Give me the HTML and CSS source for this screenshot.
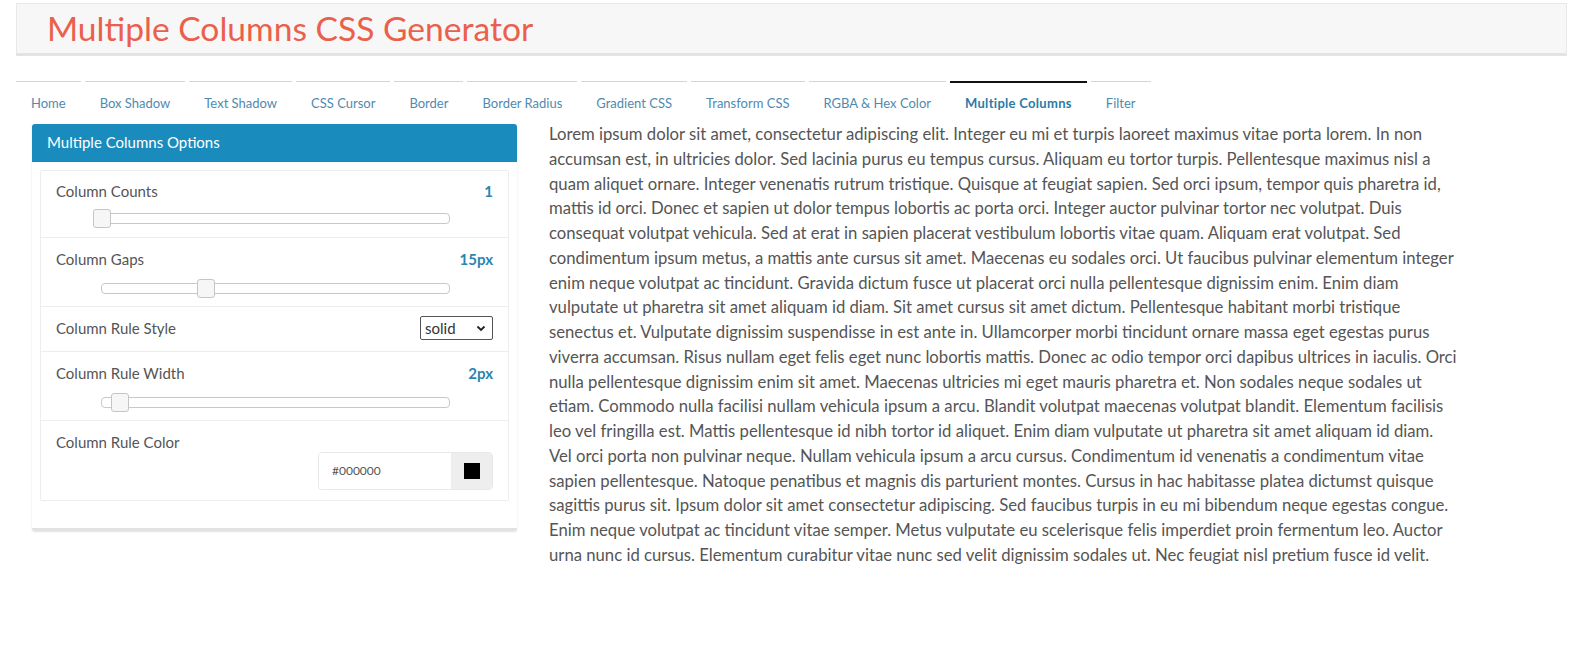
FILE: index.html
```html
<!DOCTYPE html>
<html lang="en">
<head>
<meta charset="utf-8">
<title>Multiple Columns CSS Generator</title>
<link rel="stylesheet" href="styles.css">
</head>
<body>
<header class="site-header">
  <h1 class="site-title">Multiple Columns CSS Generator</h1>
</header>
<nav class="tabs">
  <a class="tab" href="#">Home</a>
  <a class="tab" href="#">Box Shadow</a>
  <a class="tab" href="#">Text Shadow</a>
  <a class="tab" href="#">CSS Cursor</a>
  <a class="tab" href="#">Border</a>
  <a class="tab" href="#">Border Radius</a>
  <a class="tab" href="#">Gradient CSS</a>
  <a class="tab" href="#">Transform CSS</a>
  <a class="tab" href="#">RGBA &amp; Hex Color</a>
  <a class="tab tab-active" href="#">Multiple Columns</a>
  <a class="tab" href="#">Filter</a>
</nav>
<main class="content">
  <section class="panel">
    <div class="panel-heading">Multiple Columns Options</div>
    <div class="panel-body">
      <ul class="options">
        <li class="option option-first">
          <div class="option-head"><span class="option-label">Column Counts</span><span class="option-value">1</span></div>
          <div class="slider"><span class="slider-thumb" style="left:0%"></span></div>
        </li>
        <li class="option option-range">
          <div class="option-head"><span class="option-label">Column Gaps</span><span class="option-value">15px</span></div>
          <div class="slider"><span class="slider-thumb" style="left:30%"></span></div>
        </li>
        <li class="option option-select">
          <div class="option-head">
            <span class="option-label">Column Rule Style</span>
            <span class="select-wrap">
              <select class="select">
                <option>solid</option>
                <option>dotted</option>
                <option>dashed</option>
                <option>double</option>
              </select>
              <svg class="select-arrow" width="10" height="7" viewBox="0 0 10 7"><path d="M1.5 1.5 L5 5 L8.5 1.5" fill="none" stroke="#222" stroke-width="1.8"/></svg>
            </span>
          </div>
        </li>
        <li class="option option-range">
          <div class="option-head"><span class="option-label">Column Rule Width</span><span class="option-value">2px</span></div>
          <div class="slider"><span class="slider-thumb" style="left:5.2%"></span></div>
        </li>
        <li class="option option-color">
          <div class="option-label option-label-block">Column Rule Color</div>
          <div class="color-row">
            <div class="color-group">
              <span class="color-text">#000000</span>
              <span class="color-addon"><span class="color-swatch"></span></span>
            </div>
          </div>
        </li>
      </ul>
    </div>
  </section>
  <article class="preview">
    <p class="preview-text">Lorem ipsum dolor sit amet, consectetur adipiscing elit. Integer eu mi et turpis laoreet maximus vitae porta lorem. In non<br>
accumsan est, in ultricies dolor. Sed lacinia purus eu tempus cursus. Aliquam eu tortor turpis. Pellentesque maximus nisl a<br>
quam aliquet ornare. Integer venenatis rutrum tristique. Quisque at feugiat sapien. Sed orci ipsum, tempor quis pharetra id,<br>
mattis id orci. Donec et sapien ut dolor tempus lobortis ac porta orci. Integer auctor pulvinar tortor nec volutpat. Duis<br>
consequat volutpat vehicula. Sed at erat in sapien placerat vestibulum lobortis vitae quam. Aliquam erat volutpat. Sed<br>
condimentum ipsum metus, a mattis ante cursus sit amet. Maecenas eu sodales orci. Ut faucibus pulvinar elementum integer<br>
enim neque volutpat ac tincidunt. Gravida dictum fusce ut placerat orci nulla pellentesque dignissim enim. Enim diam<br>
vulputate ut pharetra sit amet aliquam id diam. Sit amet cursus sit amet dictum. Pellentesque habitant morbi tristique<br>
senectus et. Vulputate dignissim suspendisse in est ante in. Ullamcorper morbi tincidunt ornare massa eget egestas purus<br>
viverra accumsan. Risus nullam eget felis eget nunc lobortis mattis. Donec ac odio tempor orci dapibus ultrices in iaculis. Orci<br>
nulla pellentesque dignissim enim sit amet. Maecenas ultricies mi eget mauris pharetra et. Non sodales neque sodales ut<br>
etiam. Commodo nulla facilisi nullam vehicula ipsum a arcu. Blandit volutpat maecenas volutpat blandit. Elementum facilisis<br>
leo vel fringilla est. Mattis pellentesque id nibh tortor id aliquet. Enim diam vulputate ut pharetra sit amet aliquam id diam.<br>
Vel orci porta non pulvinar neque. Nullam vehicula ipsum a arcu cursus. Condimentum id venenatis a condimentum vitae<br>
sapien pellentesque. Natoque penatibus et magnis dis parturient montes. Cursus in hac habitasse platea dictumst quisque<br>
sagittis purus sit. Ipsum dolor sit amet consectetur adipiscing. Sed faucibus turpis in eu mi bibendum neque egestas congue.<br>
Enim neque volutpat ac tincidunt vitae semper. Metus vulputate eu scelerisque felis imperdiet proin fermentum leo. Auctor<br>
urna nunc id cursus. Elementum curabitur vitae nunc sed velit dignissim sodales ut. Nec feugiat nisl pretium fusce id velit.</p>
  </article>
</main>
</body>
</html>
```
FILE: styles.css
```css
* { box-sizing: border-box; }

html, body { background: #ffffff; }

body {
  margin: 0;
  padding: 3px 18px 0 16px;
  font-family: Lato, "Liberation Sans", sans-serif;
  color: #555555;
}

.site-header {
  height: 53px;
  background: #f7f7f7;
  border: 1px solid #e8e8e8;
  border-bottom: 3px solid #e3e3e3;
}

.site-title {
  margin: 0;
  padding-left: 30px;
  font-size: 33.6px;
  font-weight: 400;
  line-height: 49px;
  color: #eb604c;
}

.tabs {
  display: flex;
  gap: 4px;
  margin-top: 25px;
}

.tab {
  display: block;
  padding: 11px 15px 9px;
  border-top: 1px solid #d4d4d4;
  font-size: 13px;
  line-height: 20px;
  color: #4f8ab0;
  text-decoration: none;
}

.tab-active {
  border-top: 2px solid #111111;
  padding-top: 10px;
  font-weight: 700;
  letter-spacing: 0.3px;
  color: #2b7ba6;
}

.content {
  display: flex;
  align-items: flex-start;
}

.panel {
  flex: 0 0 485px;
  margin: 2px 0 0 16px;
  background: #ffffff;
  border-radius: 3px;
  box-shadow: 0 1px 2px rgba(0, 0, 0, 0.12);
  border-bottom: 3px solid #e2e2e2;
}

.panel-heading {
  height: 38px;
  padding: 0 15px;
  line-height: 37px;
  font-size: 15px;
  color: #ffffff;
  background: #1a8bbd;
  border-radius: 3px 3px 0 0;
}

.panel-body {
  padding: 8px 8px 27px;
}

.options {
  list-style: none;
  margin: 0;
  padding: 0;
  border: 1px solid #ededed;
  border-radius: 2px;
}

.option {
  padding: 9px 15px 12px;
  border-top: 1px solid #ededed;
}

.option-first {
  border-top: 0;
  padding-top: 8px;
  padding-bottom: 13px;
}

.option-select { padding-bottom: 11px; }

.option-color {
  padding-top: 10px;
  padding-bottom: 10px;
}

.option-head {
  display: flex;
  justify-content: space-between;
  align-items: center;
  height: 24px;
}

.option-label {
  font-size: 15px;
  line-height: 24px;
  color: #555555;
}

.option-label-block {
  display: block;
  line-height: 22px;
}

.option-value {
  font-size: 15px;
  font-weight: 700;
  color: #2a85b2;
}

.slider {
  position: relative;
  height: 11px;
  margin: 10px 43px 0 45px;
  border: 1px solid #c8c8c8;
  border-radius: 4px;
  background: #ffffff;
}

.option-range .slider { margin-top: 12px; }

.slider-thumb {
  position: absolute;
  top: -5px;
  width: 18px;
  height: 19px;
  margin-left: -9px;
  background: #f6f6f6;
  border: 1px solid #c5c5c5;
  border-radius: 3px;
}

.select-wrap {
  position: relative;
  display: block;
  width: 73px;
  height: 24px;
}

.select {
  display: block;
  width: 73px;
  height: 24px;
  margin: 0;
  padding: 0 4px;
  font-family: Lato, "Liberation Sans", sans-serif;
  font-size: 15px;
  color: #333333;
  background: #ffffff;
  border: 1px solid #555555;
  border-radius: 2px;
  -webkit-appearance: none;
  appearance: none;
}

.select-arrow {
  position: absolute;
  right: 7px;
  top: 9px;
  pointer-events: none;
}

.color-row {
  display: flex;
  justify-content: flex-end;
  margin-top: -1px;
}

.color-group {
  display: flex;
  width: 175px;
  height: 38px;
  border: 1px solid #e8e8e8;
  border-radius: 4px;
  overflow: hidden;
}

.color-text {
  flex: 1;
  padding-left: 13px;
  font-size: 12px;
  line-height: 36px;
  color: #555555;
  background: #ffffff;
}

.color-addon {
  display: flex;
  align-items: center;
  justify-content: center;
  width: 41px;
  background: #eeeeee;
}

.color-swatch {
  width: 16px;
  height: 16px;
  background: #000000;
}

.preview {
  margin-left: 32px;
  width: 960px;
}

.preview-text {
  margin: 0;
  font-size: 16.7px;
  line-height: 24.75px;
  color: #555555;
}
```
